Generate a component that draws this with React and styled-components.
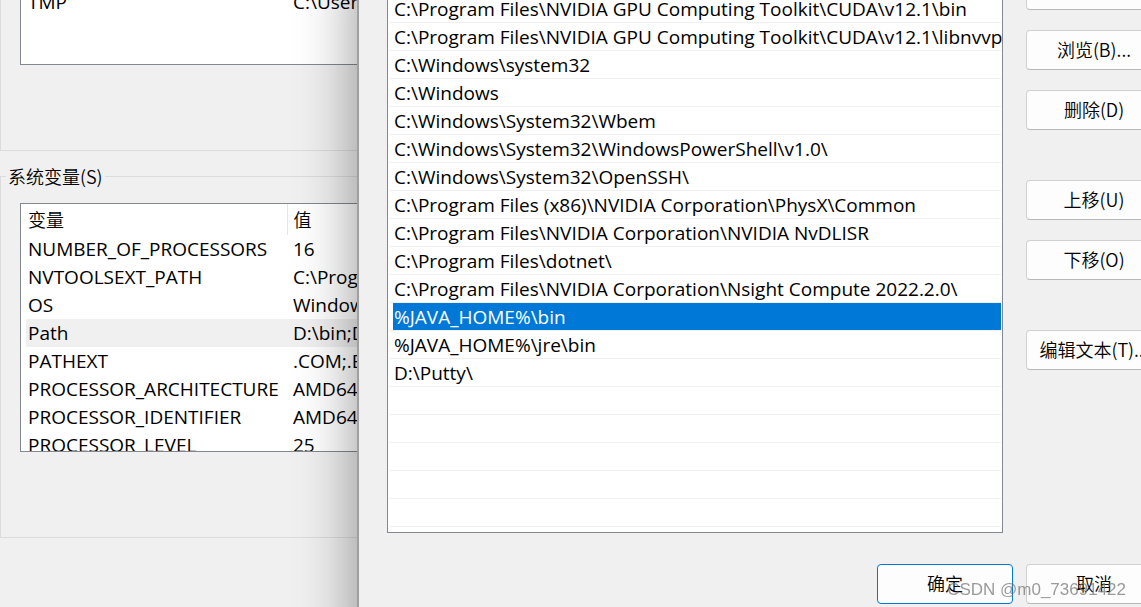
import styled, { createGlobalStyle, css } from 'styled-components';

const GlobalStyle = createGlobalStyle`
  * {
    box-sizing: border-box;
  }
  body {
    margin: 0;
    overflow: hidden;
    background: #f0f0f0;
    color: #000;
    font-family: "Open Sans", "Noto Sans CJK SC", sans-serif;
    font-size: 19px;
    line-height: 28px;
  }
`;

const Desktop = styled.div`
  display: flex;
  height: 100vh;
  overflow: hidden;
`;

const VariablesWindow = styled.section`
  flex: 0 0 357px;
  min-width: 0;
  overflow: hidden;
  white-space: nowrap;
`;

const Group = styled.fieldset`
  min-width: 0;
  margin: 0;
  padding: 0 0 85px 19px;
  border: 1px solid #dcdcdc;
  border-width: ${({ $open }) => ($open ? '0 0 1px 1px' : '1px 0 1px 1px')};
`;

const Legend = styled.legend`
  margin: 0 0 13px -14px;
  padding: 0 2px;
  font-family: "Noto Sans CJK SC", sans-serif;
  font-size: 18px;
  font-weight: 350;
`;

const TableFrame = styled.div`
  height: ${({ $height }) => $height}px;
  overflow: hidden;
  border: 1px solid #828790;
  border-width: ${({ $open }) => ($open ? '0 0 1px 1px' : '1px 0 1px 1px')};
  background: #fff;
`;

const Table = styled.table`
  width: 520px;
  margin: ${({ $scrolled }) => ($scrolled ? '-12px' : '0')} 0 0 5px;
  border-collapse: collapse;
  table-layout: fixed;
`;

const HeadCell = styled.th`
  width: ${({ $width }) => $width};
  height: 31px;
  padding: 0 0 2px ${({ $first }) => ($first ? '2px' : '6px')};
  border-right: ${({ $first }) => ($first ? '1px solid #e5e5e5' : '0')};
  font-family: "Noto Sans CJK SC", sans-serif;
  font-size: 18px;
  font-weight: 350;
  text-align: left;
`;

const Row = styled.tr`
  height: 28px;
  background: ${({ $selected }) => ($selected ? '#f0f0f0' : 'transparent')};
`;

const Cell = styled.td`
  width: ${({ $width }) => $width};
  padding: 0 0 0 ${({ $first }) => ($first ? '2px' : '6px')};
`;

const Spacer = styled.div`
  height: 11px;
`;

// stretched past the screen so that its shadow does not fade at the corners
const Dialog = styled.section`
  position: relative;
  flex: 1;
  min-width: 0;
  margin: -50px 0;
  padding: 50px 0;
  border-left: 2px solid #a0a0a0;
  background: #f0f0f0;
  box-shadow: 0 10px 56px rgba(0, 0, 0, 0.42);
`;

const DialogContent = styled.div`
  margin: 0 -21px 0 28px;
`;

const DialogBody = styled.div`
  display: flex;
  gap: 23px;
`;

const PathList = styled.ul`
  flex: 1;
  min-width: 0;
  margin: -5px 0 0;
  padding: 0 1px 5px;
  border: 1px solid #828790;
  border-top: 0;
  background: #fff;
  list-style: none;
`;

const PathItem = styled.li`
  height: 28px;
  padding-left: 4px;
  border-bottom: 1px solid #f0f0f0;
`;

const PathText = styled.span`
  display: block;
  height: 27px;
  padding-left: 1px;
  white-space: nowrap;
  ${({ $selected }) => $selected && css`
    background: #0078d7;
    color: #fff;
  `}
`;

const Actions = styled.div`
  display: flex;
  flex-direction: column;
  gap: 50px;
  margin-top: -30px;
`;

const ActionGroup = styled.div`
  display: flex;
  flex-direction: column;
  gap: 20px;
`;

const Button = styled.button`
  width: 136px;
  height: 40px;
  padding: 0 0 2px;
  border: 1px solid ${({ $primary }) => ($primary ? '#0078d4' : '#d0d0d0')};
  border-bottom-color: ${({ $primary }) => ($primary ? '#0078d4' : '#b8b8b8')};
  border-radius: 4px;
  background: #fdfdfd;
  color: #000;
  font-family: "Noto Sans CJK SC", sans-serif;
  font-size: 18px;
  font-weight: 350;
  line-height: 28px;
`;

const Footer = styled.div`
  display: flex;
  justify-content: flex-end;
  gap: 13px;
  margin-top: 31px;
`;

const Watermark = styled.div`
  position: fixed;
  right: 15px;
  bottom: 7px;
  color: rgba(120, 120, 120, 0.75);
  font: 17px/20px "Liberation Sans", sans-serif;
`;

const variables = [
  ['NUMBER_OF_PROCESSORS', '16'],
  ['NVTOOLSEXT_PATH', 'C:\\Program Files\\'],
  ['OS', 'Windows_NT'],
  ['Path', 'D:\\bin;D:\\'],
  ['PATHEXT', '.COM;.EXE'],
  ['PROCESSOR_ARCHITECTURE', 'AMD64'],
  ['PROCESSOR_IDENTIFIER', 'AMD64'],
  ['PROCESSOR_LEVEL', '25'],
];

const paths = [
  'C:\\Program Files\\NVIDIA GPU Computing Toolkit\\CUDA\\v12.1\\bin',
  'C:\\Program Files\\NVIDIA GPU Computing Toolkit\\CUDA\\v12.1\\libnvvp',
  'C:\\Windows\\system32',
  'C:\\Windows',
  'C:\\Windows\\System32\\Wbem',
  'C:\\Windows\\System32\\WindowsPowerShell\\v1.0\\',
  'C:\\Windows\\System32\\OpenSSH\\',
  'C:\\Program Files (x86)\\NVIDIA Corporation\\PhysX\\Common',
  'C:\\Program Files\\NVIDIA Corporation\\NVIDIA NvDLISR',
  'C:\\Program Files\\dotnet\\',
  'C:\\Program Files\\NVIDIA Corporation\\Nsight Compute 2022.2.0\\',
  '%JAVA_HOME%\\bin',
  '%JAVA_HOME%\\jre\\bin',
  'D:\\Putty\\',
  '',
  '',
  '',
  '',
  '',
];

const actions = [
  ['', '浏览(B)...', '删除(D)'],
  ['上移(U)', '下移(O)'],
  ['编辑文本(T)...'],
];

export default function App() {
  return (
    <>
      <GlobalStyle />
      <Desktop>
        <VariablesWindow>
          <Group $open>
            <TableFrame $open $height={65}>
              <Table $scrolled>
                <tbody>
                  <Row>
                    <Cell $first $width="261px">TMP</Cell>
                    <Cell>C:\Users\</Cell>
                  </Row>
                </tbody>
              </Table>
            </TableFrame>
          </Group>
          <Spacer />
          <Group>
            <Legend>系统变量(S)</Legend>
            <TableFrame $height={249}>
              <Table>
                <thead>
                  <tr>
                    <HeadCell $first $width="261px">变量</HeadCell>
                    <HeadCell>值</HeadCell>
                  </tr>
                </thead>
                <tbody>
                  {variables.map(([name, value]) => (
                    <Row key={name} $selected={name === 'Path'}>
                      <Cell $first>{name}</Cell>
                      <Cell>{value}</Cell>
                    </Row>
                  ))}
                </tbody>
              </Table>
            </TableFrame>
          </Group>
        </VariablesWindow>
        <Dialog>
          <DialogContent>
            <DialogBody>
              <PathList>
                {paths.map((path, i) => (
                  <PathItem key={i}>
                    <PathText $selected={path === '%JAVA_HOME%\\bin'}>{path}</PathText>
                  </PathItem>
                ))}
              </PathList>
              <Actions>
                {actions.map((group, i) => (
                  <ActionGroup key={i}>
                    {group.map((label) => (
                      <Button key={label} type="button">{label}</Button>
                    ))}
                  </ActionGroup>
                ))}
              </Actions>
            </DialogBody>
            <Footer>
              <Button type="button" $primary>确定</Button>
              <Button type="button">取消</Button>
            </Footer>
          </DialogContent>
        </Dialog>
      </Desktop>
      <Watermark>CSDN @m0_73691422</Watermark>
    </>
  );
}
